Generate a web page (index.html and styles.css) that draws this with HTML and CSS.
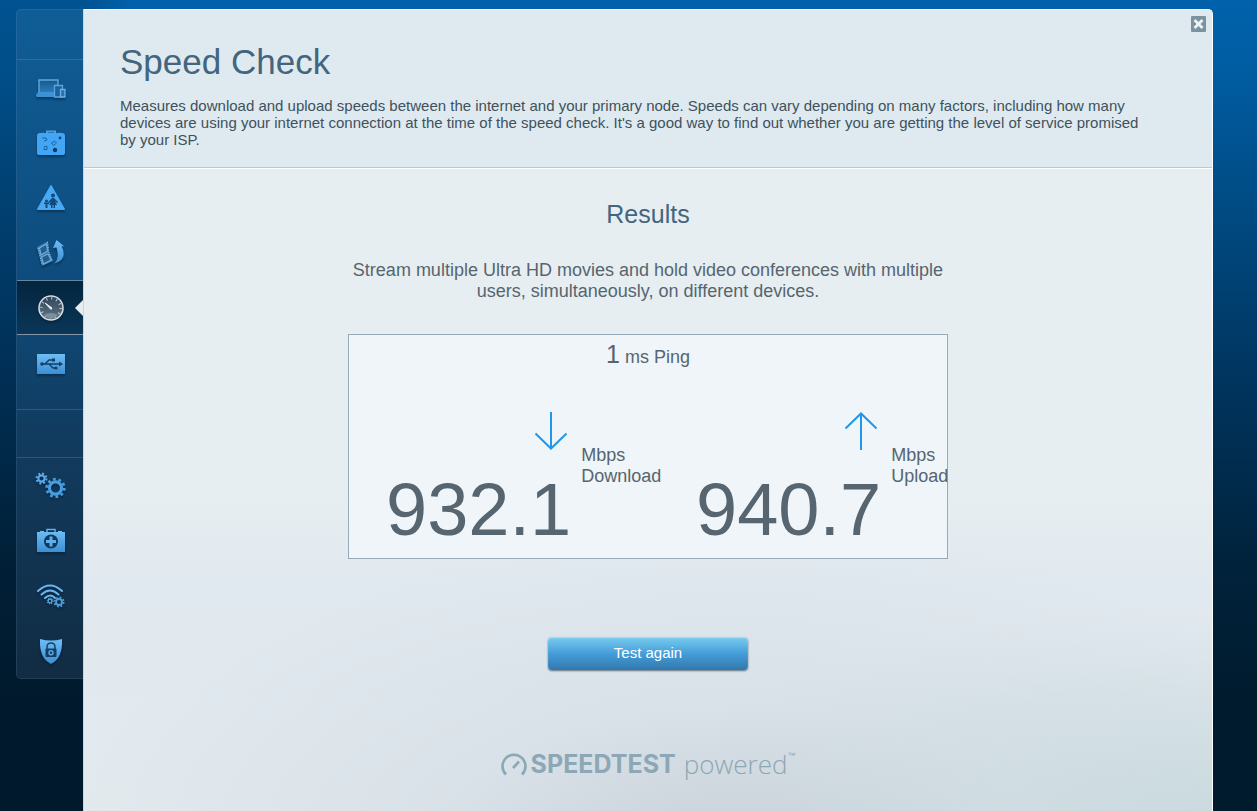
FILE: index.html
```html
<!DOCTYPE html>
<html lang="en">
<head>
    <meta charset="UTF-8">
    <meta name="viewport" content="width=device-width, initial-scale=1.0">
    <title>Speed Check</title>
    <link rel="stylesheet" href="styles.css">
</head>
<body>
    <!-- shared icon fills -->
    <svg class="defs" aria-hidden="true">
        <defs>
            <linearGradient id="blue" x1="0" y1="0" x2="0" y2="1">
                <stop offset="0" stop-color="#6fbcf5"/>
                <stop offset="1" stop-color="#3a8fd4"/>
            </linearGradient>
            <linearGradient id="deep" x1="0" y1="0" x2="0" y2="1">
                <stop offset="0" stop-color="#17598f"/>
                <stop offset="1" stop-color="#2d7dbb"/>
            </linearGradient>
            <linearGradient id="dial" x1="0" y1="0" x2="0" y2="1">
                <stop offset="0" stop-color="#2c4357"/>
                <stop offset="1" stop-color="#64798a"/>
            </linearGradient>
            <g id="gear">
                <circle r="7.6" fill="none" stroke-width="4"/>
                <circle r="11" fill="none" stroke-width="3.4" stroke-dasharray="3.4 3.512"/>
            </g>
            <g id="small-gear">
                <circle r="7" fill="none" stroke-width="4.6"/>
                <circle r="11" fill="none" stroke-width="4.4" stroke-dasharray="4.4 4.239"/>
            </g>
        </defs>
    </svg>

    <nav class="sidebar">
        <div class="spacer"></div>
        <ul class="menu main-menu">
            <li><a href="#" aria-label="Device List">
                <svg width="32" height="30" viewBox="0 0 32 30">
                    <path d="M4 7h19v13H4z" fill="url(#deep)" stroke="#62a9dc" stroke-width="1.4"/>
                    <path d="M3 19h17v5H2q-1-1-1-2z" fill="#3d92d5"/>
                    <path d="M19.500 12.500h8v11.500h-8z" fill="#1b619c" stroke="#5ca7de" stroke-width="1.300"/>
                    <path d="M25.500 16.500h4.500v7.500h-4.500z" fill="#2872ae" stroke="#66b2eb" stroke-width="1.300"/>
                </svg>
            </a></li>
            <li><a href="#" aria-label="Guest Access">
                <svg width="32" height="30" viewBox="0 0 32 30">
                    <path d="M12 6V3.500h8V6" fill="none" stroke="#4c9fe0" stroke-width="2"/>
                    <path d="M5 5h2q1-1 2 0h14q1-1 2 0h2q3 0 3 3v17q0 2-2 2H4q-2 0-2-2V8q0-3 3-3z" fill="#42a5f5"/>
                    <path d="M7 10h4l1 2-3 1M16.500 15l3-2 2 2-3 2.500zM9 18.500h3v3H9v-2" fill="none" stroke="#1b62a0" stroke-width="1"/>
                    <circle cx="20" cy="22" r="2.200" fill="#083c69"/>
                    <circle cx="25" cy="10" r="1.400" fill="#0d4a7c"/>
                </svg>
            </a></li>
            <li><a href="#" aria-label="Parental Controls">
                <svg width="32" height="30" viewBox="0 0 32 30">
                    <path d="M15 3q1-2 2 0l13 23q0 1-1 1H3q-1 0-1-1z" fill="#49a8f4"/>
                    <g fill="#124a7a">
                        <circle cx="18" cy="12.500" r="2"/>
                        <path d="M17 15h2l4 4-1 1-2-2 2 4h-2v3h-1.500v-3h-1v3H16v-3h-2l2-4-2 2-1-1z"/>
                        <circle cx="11.500" cy="18" r="1.500"/>
                        <path d="M9 19.500h5V21h-1.500v4h-2v-4H9z"/>
                    </g>
                </svg>
            </a></li>
            <li><a href="#" aria-label="Media Prioritization">
                <svg width="32" height="30" viewBox="0 0 32 30">
                    <path d="M2 9l11-6 1 10 4 10-11 5-2-8z" fill="#3a7cae"/>
                    <path d="M4.500 10l7-4 1 7-6.500 4zM6.500 19l6.500-3 3 6-7.500 4z" fill="#225f90" stroke="#71acd6" stroke-width="1.200"/>
                    <path d="M3 10l4 17M12.500 4l1 9 4 10" fill="none" stroke="#a0c9e7" stroke-dasharray="1 1.500"/>
                    <path d="M18 10l3.500-8 8 6.500-3-.5q7 14-7.500 17.500 6-5 2.500-16z" fill="url(#blue)"/>
                </svg>
            </a></li>
            <li class="active"><a href="#" aria-label="Speed Check" aria-current="page">
                <svg width="32" height="30" viewBox="0 0 32 30">
                    <circle cx="16" cy="15" r="12" fill="url(#dial)" stroke="#d5dbe0" stroke-width="1.600"/>
                    <circle cx="16" cy="15" r="9.600" fill="none" stroke="#c3cdd5" stroke-width="2.600" stroke-dasharray="1 4.026"/>
                    <path d="M10 10l7 5-1 1.500z" fill="#e9edf0" stroke="#e9edf0" stroke-width="1"/>
                    <path d="M9 22q7-4 14 0-7 7-14 0z" fill="#7d8e9b"/>
                </svg>
            </a></li>
            <li><a href="#" aria-label="External Storage">
                <svg width="32" height="30" viewBox="0 0 32 30">
                    <path d="M2 6h28v20H2z" fill="url(#blue)"/>
                    <g fill="none" stroke="#123f65" stroke-width="1.300">
                        <path d="M6 16h19M10 16l4-4h4M14 16l4 4h3"/>
                    </g>
                    <path d="M24 13.500l4 2.500-4 2.500zM17 10.500h3v3h-3z" fill="#123f65"/>
                    <circle cx="7" cy="16" r="1.800" fill="#123f65"/>
                    <circle cx="21" cy="20" r="1.600" fill="#123f65"/>
                </svg>
            </a></li>
        </ul>
        <div class="spacer"></div>
        <ul class="menu">
            <li><a href="#" aria-label="Connectivity">
                <svg width="32" height="30" viewBox="0 0 32 30">
                    <use href="#small-gear" stroke="#5aaaeb" transform="translate(6.500 7.500) scale(.45)"/>
                    <use href="#gear" stroke="#469de2" transform="translate(20.500 17) scale(.8)"/>
                </svg>
            </a></li>
            <li><a href="#" aria-label="Troubleshooting">
                <svg width="32" height="30" viewBox="0 0 32 30">
                    <path d="M12 6V3.500h8V6" fill="none" stroke="#62afe9" stroke-width="1.500"/>
                    <path d="M2 6h3V5h4v1h14V5h4v1h3v20H2z" fill="url(#blue)"/>
                    <circle cx="16" cy="15.500" r="7" fill="#12385a"/>
                    <path d="M14.500 10.500h3V14H21v3h-3.500v3.500h-3V17H11v-3h3.500z" fill="#5cb0ef"/>
                </svg>
            </a></li>
            <li><a href="#" aria-label="Wireless">
                <svg width="32" height="30" viewBox="0 0 32 30">
                    <g fill="none" stroke="#68b5f0" stroke-width="2" stroke-linecap="round">
                        <path d="M3 10q12-11 24 0M6.500 13.500q8.500-8 17 0M10 17q5.500-5 10 0"/>
                    </g>
                    <use href="#small-gear" stroke="#5ba8df" transform="translate(15 20) scale(.26)"/>
                    <use href="#small-gear" stroke="#4c9cd8" transform="translate(24 21) scale(.42)"/>
                </svg>
            </a></li>
            <li><a href="#" aria-label="Security">
                <svg width="32" height="30" viewBox="0 0 32 30">
                    <path d="M5 3q11 3 22 0 1 19-11 25Q4 22 5 3z" fill="url(#blue)"/>
                    <path d="M12 13v-2q0-4 4-4t4 4v2" fill="none" stroke="#15446c" stroke-width="1.500"/>
                    <rect x="10.500" y="12.500" width="11" height="8.500" rx="1" fill="#123f65"/>
                    <circle cx="16" cy="16.800" r="2" fill="none" stroke="#61a9dd" stroke-width="1.400"/>
                </svg>
            </a></li>
        </ul>
    </nav>

    <main class="panel">
        <header class="panel-header">
            <button type="button" class="close" aria-label="Close">
                <svg width="15" height="16" viewBox="0 0 15 16">
                    <rect width="15" height="16" rx="1" fill="#7b929f"/>
                    <path d="M4.500 5l6 6M10.500 5l-6 6" stroke="#edf3f6" stroke-width="2.800" stroke-linecap="square"/>
                </svg>
            </button>
            <h1>Speed Check</h1>
            <p>Measures download and upload speeds between the internet and your primary node. Speeds can vary depending on many factors, including how many devices are using your internet connection at the time of the speed check. It's a good way to find out whether you are getting the level of service promised by your ISP.</p>
        </header>

        <section class="content">
            <h2>Results</h2>
            <p class="summary">Stream multiple Ultra HD movies and hold video conferences with multiple users, simultaneously, on different devices.</p>

            <div class="results">
                <div class="ping"><span>1</span> ms Ping</div>
                <div class="speeds">
                    <div class="speed">
                        <div class="reading">
                            <svg width="34" height="38" viewBox="0 0 34 38">
                                <path d="M17 0v36.500M1.500 21.500L17 36.500l15.500-15" fill="none" stroke="#1f97ea" stroke-width="2"/>
                            </svg>
                            <span class="value">932.1</span>
                        </div>
                        <div class="unit">Mbps<br>Download</div>
                    </div>
                    <div class="speed">
                        <div class="reading">
                            <svg width="34" height="38" viewBox="0 0 34 38">
                                <path d="M17 38V1.500M1.500 16.500L17 1.500l15.500 15" fill="none" stroke="#1f97ea" stroke-width="2"/>
                            </svg>
                            <span class="value">940.7</span>
                        </div>
                        <div class="unit">Mbps<br>Upload</div>
                    </div>
                </div>
            </div>

            <button type="button" class="btn">Test again</button>

            <div class="brand">
                <svg width="26" height="24" viewBox="0 0 26 24">
                    <path d="M5 21.500A11.500 11.500 0 1 1 21 21.500" fill="none" stroke="#8ca7b5" stroke-width="2.600"/>
                    <path d="M12 15l6-6.500" stroke="#8ca7b5" stroke-width="2.600"/>
                </svg>
                <span class="brand-name">SPEEDTEST</span>
                <span class="brand-powered">powered</span>
                <span class="tm">™</span>
            </div>
        </section>
    </main>
</body>
</html>
```
FILE: styles.css
```css
* {
    box-sizing: border-box;
}
body {
    display: flex;
    align-items: flex-start;
    min-height: 100vh;
    margin: 0;
    padding: 9px 44px 0 16px;
    font-family: "Liberation Sans", Arial, sans-serif;
    color: #56656f;
    background:
        linear-gradient(to right, rgba(0, 20, 40, 0.2) 83px, transparent 130px),
        linear-gradient(#0062ab 0, #005da2 70px, #004d87 190px, #00355f 380px, #00233c 560px, #001b2e 700px);
}
h1, h2, p, ul {
    margin: 0;
    padding: 0;
    font-weight: normal;
}
.defs {
    position: absolute;
    width: 0;
    height: 0;
}

/* Sidebar */
.sidebar {
    flex: 0 0 67px;
    padding-top: 2px;
    border: 1px solid rgba(130, 170, 205, 0.25);
    border-right: 0;
    border-radius: 5px 0 0 5px;
    background: linear-gradient(#105d96, #0e4c7d 40%, #113c60 63%, #112c43) padding-box;
}
.spacer {
    height: 47px;
}
.menu {
    list-style: none;
    border-top: 1px solid rgba(130, 170, 205, 0.25);
}
.main-menu {
    padding-bottom: 19px;
    border-bottom: 1px solid rgba(130, 170, 205, 0.25);
}
.menu a {
    display: flex;
    align-items: center;
    justify-content: center;
    height: 55px;
}
.menu svg {
    margin-left: 2px;
    filter: drop-shadow(0 2px 1px rgba(0, 15, 35, 0.4));
}
.menu .active {
    position: relative;
    border-top: 1px solid #6685a0;
    border-bottom: 1px solid #8195a5;
    background: linear-gradient(#03253d, #0b3658);
}
.menu .active a {
    height: 53px;
}
.menu .active::after {
    content: "";
    position: absolute;
    top: 50%;
    right: 0;
    margin-top: -8px;
    border: 8px solid transparent;
    border-right-color: #e5edf0;
    border-left: 0;
}

/* Panel */
.panel {
    flex: 1;
    min-width: 0;
    min-height: calc(100vh - 9px);
    border: 1px solid #fff;
    border-left-color: #c7d7e0;
    border-bottom: 0;
    border-radius: 0 5px 0 0;
    background:
        radial-gradient(ellipse 50% 25% at 100% 100%, rgba(200, 217, 221, 0.9), transparent),
        radial-gradient(ellipse 60% 40% at 58% 105%, #c9d0d8, rgba(214, 222, 230, 0.7) 45%, transparent),
        linear-gradient(#e6eef1 60%, #e1e9f0 72%, #e2eaee);
}
.panel-header {
    position: relative;
    padding: 32px 60px 19px 36px;
    border-bottom: 1px solid #bcc8ce;
    border-radius: 0 4px 0 0;
    background: #dfeaf0;
    box-shadow: 0 1px 0 #fff;
}
.panel-header h1 {
    margin-bottom: 15px;
    font-size: 35px;
    line-height: 40px;
    color: #43657d;
}
.panel-header p {
    font-size: 15px;
    line-height: 17px;
    color: #40515c;
}
.close {
    position: absolute;
    top: 6px;
    right: 6px;
    padding: 0;
    border: 0;
    background: none;
    cursor: pointer;
}
.close svg {
    display: block;
}
.content {
    display: flex;
    flex-direction: column;
    align-items: center;
    padding: 32px 20px;
}
.content h2 {
    margin-bottom: 31px;
    font-size: 25px;
    line-height: 29px;
    color: #43657d;
}
.summary {
    max-width: 600px;
    margin-bottom: 32px;
    font-size: 18px;
    line-height: 21px;
    text-align: center;
}
.results {
    width: 600px;
    max-width: 100%;
    padding: 5px 0;
    border: 1px solid #97aab5;
    background: #eff5f8;
    font-size: 18px;
    line-height: 21px;
}
.ping {
    line-height: 29px;
    text-align: center;
}
.ping span {
    font-size: 25px;
}
.speeds {
    display: flex;
    padding: 40px 0 0 37px;
}
.speed {
    display: flex;
    flex: 0 0 310px;
    gap: 10px;
}
.speed:last-child {
    flex: 1;
}
.reading {
    display: flex;
    flex-direction: column;
    align-items: flex-end;
}
.reading svg {
    margin-right: 3px;
}
.value {
    padding-top: 17px;
    font-size: 74px;
    line-height: 86px;
}
.unit {
    padding-top: 33px;
}
.btn {
    width: 200px;
    height: 33px;
    margin: 78px 0 80px;
    padding: 0 0 3px;
    border: 0;
    border-radius: 4px;
    background: linear-gradient(#79cdf0, #459dd9 50%, #3178ad);
    box-shadow: inset 0 1px 1px #a9e1f7, 0 1px 2px #5d6e7b;
    color: #fff;
    font-family: inherit;
    font-size: 15px;
    cursor: pointer;
}

/* Footer brand */
.brand {
    display: flex;
    align-items: center;
    color: #8ca7b5;
    font-size: 26px;
    line-height: 29px;
}
.brand-name {
    margin: 0 8px 0 4px;
    font-family: Inter, sans-serif;
    font-size: 25px;
    font-weight: 700;
}
.brand-powered {
    font-family: "Open Sans", sans-serif;
    font-weight: 300;
}
.tm {
    align-self: flex-start;
    font-size: 8px;
    line-height: 12px;
}
```
